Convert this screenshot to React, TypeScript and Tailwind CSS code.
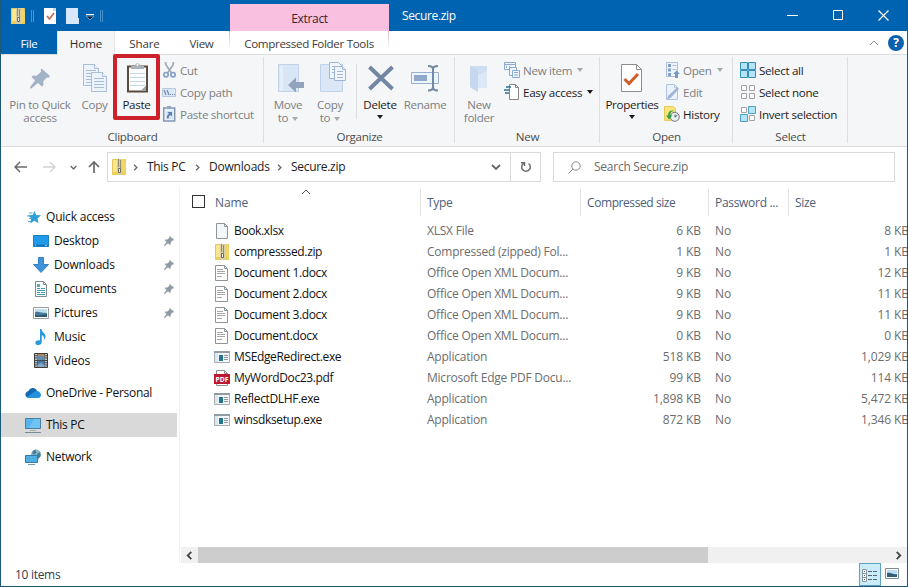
import type { ReactNode } from 'react'
import clsx from 'clsx'

type IconProps = { className?: string }

/* ---------- icons ---------- */

function ZipIcon({ className = 'w-4 h-4' }: IconProps) {
  return (
    <svg viewBox="0 0 16 16" className={className} fill="none">
      <path d="M1.500.5h13v15h-13z" fill="#fae68d" stroke="#e3c65c" />
      <path d="M11 0h3v3h1v13h-4z" fill="#f3d565" />
      <path d="M1 13h14v3H1z" fill="#efcf5b" />
      <path d="M6 0h5v16H6z" fill="#d9cfa6" />
      <path d="M7 1h1M9 2h1M7 3h1M9 4h1M7 5h1M9 6h1M7 7h1M9 8h1" stroke="#4f4a45" strokeWidth="1" />
      <path d="M7.500 9.500h2v4h-2z" fill="#f6f2e2" stroke="#6f6a5f" />
    </svg>
  )
}

function PushpinIcon({ className = 'w-3 h-3', fill = '#8c9aa8' }: IconProps & { fill?: string }) {
  return (
    <svg viewBox="0 0 20 20" className={className}>
      <path d="M11.500 0 20 7.500l-1.500 1.700-1.800-.3-3.500 4 .3 3.600-1.500 1.700-4-3.600L1.300 20 0 19.800.1 18.500l5-6.600L1.500 8.400 3 6.900l3.700.3 4.500-4.300-.6-1.800z" fill={fill} />
    </svg>
  )
}

function CopyIcon() {
  return (
    <svg viewBox="0 0 32 32" className="w-8 h-8" fill="#edf3fb" stroke="#a9bdd9">
      <path d="M4.500 2.500h11l4 4v17h-15z" />
      <path d="M15.500 2.500v4h4M7 8.500h10M7 11.500h10M7 14.500h6M7 17.500h5M7 20.500h5" />
      <path d="M12.500 10.500h11l4 4v15h-15z" />
      <path d="M23.500 10.500v4h4M15 16.500h10M15 19.500h10M15 22.500h10M15 25.500h10" />
    </svg>
  )
}

function PasteIcon() {
  return (
    <svg viewBox="0 0 32 32" className="w-8 h-8" fill="none">
      <path d="M7 4.500h19v25H7z" fill="#fbfdff" stroke="#5b4a3f" strokeWidth="2" />
      <path d="M9 11.500h15M9 15.500h15M9 19.500h15M9 23.500h15" stroke="#c3d9e6" />
      <path d="M20 28.500l5-5v5z" fill="#9da5aa" />
      <path d="M10 7V4h4c0-2 1-2.500 2.500-2.500S19 2 19 4h4v3z" fill="#a9b2bb" />
      <circle cx="16.500" cy="3" r="1" fill="#fff" />
    </svg>
  )
}

function ScissorsIcon() {
  return (
    <svg viewBox="0 0 16 16" className="w-4 h-4" fill="none">
      <path d="M3.500 0 4 3l5.500 8M11.500 0 11 3l-5.500 8" stroke="#a2abb6" strokeWidth="1.800" />
      <circle cx="4" cy="12.700" r="2.200" stroke="#819fc8" strokeWidth="1.600" />
      <circle cx="11" cy="12.700" r="2.200" stroke="#819fc8" strokeWidth="1.600" />
    </svg>
  )
}

function CopyPathIcon() {
  return (
    <svg viewBox="0 0 16 16" className="w-4 h-4" fill="none">
      <path d="M.5 4.500h13v8H.5z" fill="#dbe8f7" stroke="#b9c9dd" />
      <path d="M2 6l2 5M5 6l2 5" stroke="#7189ac" strokeWidth="1.200" />
      <path d="M8 10.500h1M10 10.500h1M12 10.500h1" stroke="#7189ac" />
    </svg>
  )
}

function PasteShortcutIcon() {
  return (
    <svg viewBox="0 0 16 16" className="w-4 h-4" fill="none">
      <path d="M1.700 2h11v13h-11z" fill="#e9f1fb" stroke="#8397b3" strokeWidth="1.500" />
      <path d="M5 0h4v3H5z" fill="#96a9c1" />
      <path d="M4 5h7v8H4z" fill="#d6e4f5" />
      <path d="M5 12.500c-.5-2.500.5-4 2-4.800L5.500 6H10v4.500L8.600 9C7 9.700 6.500 11 6.800 12.500z" fill="#5c7fae" />
    </svg>
  )
}

function MoveToIcon() {
  return (
    <svg viewBox="0 0 32 32" className="w-8 h-8">
      <path d="M6.500 2.500h20v27h-20z" fill="#d9e6f5" stroke="#c1d3ea" />
      <path d="M8 4h3v24H8z" fill="#e5eef9" />
      <path d="M16 23l8-7.500V20h8v6h-8v4.500z" fill="#91a3bd" />
    </svg>
  )
}

function CopyToIcon() {
  return (
    <svg viewBox="0 0 32 32" className="w-8 h-8" fill="#f1f6fc" stroke="#9fb6d5">
      <path d="M6.500 2.500h22v27h-22z" fill="#dbe7f6" stroke="#c1d3ea" />
      <path d="M15.500.5h9l3 3v13h-12z" />
      <path d="M18 4.500h6M18 7.500h3M18 10.500h2" />
      <path d="M20.500 4.500h8l3 3v11h-11z" />
      <path d="M28.500 4.500v3h3M23 9.500h6M23 12.500h6M23 15.500h6" />
    </svg>
  )
}

function DeleteIcon() {
  return (
    <svg viewBox="0 0 32 32" className="w-8 h-8" fill="none">
      <path d="M5.500 5 28.500 27M28.500 5 5.500 27" stroke="#7387a2" strokeWidth="4" />
    </svg>
  )
}

function RenameIcon() {
  return (
    <svg viewBox="0 0 32 32" className="w-8 h-8" fill="none">
      <path d="M2.500 10.500h27v11h-27z" fill="#edf4fc" stroke="#98b0d0" />
      <path d="M5 13h13v6H5z" fill="#91a8ca" />
      <path d="M19 4c3 0 5 .3 5 3v18c0 2.700-2 3.500-5 3.500M29 4c-3 0-5 .3-5 3v18c0 2.700 2 3.500 5 3.500" stroke="#7489a6" strokeWidth="2" />
    </svg>
  )
}

function NewFolderIcon() {
  return (
    <svg viewBox="0 0 32 32" className="w-8 h-8">
      <path d="M7 4h17v21h-9v5l-8-5z" fill="#cfdef1" />
      <path d="M7 4l8 4v22l-8-5z" fill="#c6d8ee" />
      <path d="M15 12h3l6-4v18h-9z" fill="#dce8f6" />
    </svg>
  )
}

function NewItemIcon() {
  return (
    <svg viewBox="0 0 16 16" className="w-4 h-4" fill="#eff5fc" stroke="#8caad0">
      <path d="M.5.5h11v7H.5zM.5 2.500h11M2.500 4v2M5.500 4v2" />
      <path d="M5.500 5.500h7v8h-7z" />
      <path d="M8.500 8.500h7v7h-7zM10 10.500h4M10 13h4" />
    </svg>
  )
}

function EasyAccessIcon() {
  return (
    <svg viewBox="0 0 16 16" className="w-4 h-4" fill="none">
      <path d="M5.500.5h6l3 3v12h-9z" fill="#fff" stroke="#888" />
      <path d="M11.500.5v3h3" stroke="#888" />
      <path d="M2 3h5M0 6h6M1 9h4" stroke="#2f7196" strokeWidth="1.400" />
    </svg>
  )
}

function PropertiesIcon({ className = 'w-8 h-8' }: IconProps) {
  return (
    <svg viewBox="0 0 32 32" className={className} fill="none">
      <path d="M5.500 2.500h15l5 5v22h-20z" fill="#fff" stroke="#8d8d8d" />
      <path d="M20.500 2.500v5h5" stroke="#8d8d8d" />
      <path d="M8.500 17l4.500 4.500L22 12" stroke="#cf5d2c" strokeWidth="3" />
    </svg>
  )
}

function OpenIcon() {
  return (
    <svg viewBox="0 0 16 16" className="w-4 h-4" fill="none">
      <path d="M2.500.5h11v14h-11z" fill="#eef4fc" stroke="#a9bfdd" />
      <path d="M4 2h3v3H4zM4 6.500h3v3H4zM4 11h3v3H4z" fill="#839fc8" />
      <path d="M8.500 3.500h4M8.500 7.500h4" stroke="#abc0db" />
      <path d="M11 16v-4H9l3.500-3.500L16 12h-2v4z" fill="#7897c5" />
    </svg>
  )
}

function EditIcon() {
  return (
    <svg viewBox="0 0 16 16" className="w-4 h-4" fill="none">
      <path d="M2.500.5h8l3 3v12h-11z" fill="#eaf2fb" stroke="#afc4df" />
      <path d="M3 15.500l1-3.500L13.500 3l1.500 1.800L6.500 14z" fill="#9fb6d6" />
      <path d="M10.500.5v3h3" stroke="#afc4df" />
    </svg>
  )
}

function HistoryIcon() {
  return (
    <svg viewBox="0 0 16 16" className="w-4 h-4" fill="none">
      <path d="M.5.5h9l2 2v12H.5z" fill="#fbe379" stroke="#e5cb59" />
      <circle cx="10.800" cy="10.800" r="4.500" fill="#e7eeee" stroke="#71777a" />
      <path d="M11 8.500v2.700l2.500-2.200" stroke="#57636a" />
      <path d="M2 9.500h2c0-4 3-6 6-4.500-3 .2-3.700 2-3.700 4.500h2L5 13.500z" fill="#32a34b" />
    </svg>
  )
}

function SelectIcon({ kind }: { kind: 'all' | 'none' | 'invert' }) {
  if (kind === 'all') {
    return (
      <svg viewBox="0 0 16 16" className="w-4 h-4" fill="#b4e4f6" stroke="#368eb5">
        <path d="M.5.5h7v7h-7zM8.500.5h7v7h-7zM.5 8.500h7v7h-7zM8.500 8.500h7v7h-7z" />
      </svg>
    )
  }
  if (kind === 'none') {
    return (
      <svg viewBox="0 0 16 16" className="w-4 h-4" fill="#fff" stroke="#a2a2a2">
        <path d="M1.500 1.500h5v5h-5zM9.500 1.500h5v5h-5zM1.500 9.500h5v5h-5zM9.500 9.500h5v5h-5z" />
      </svg>
    )
  }
  return (
    <svg viewBox="0 0 16 16" className="w-4 h-4" stroke="#4c9fc3">
      <path d="M8.500.5h7v7h-7zM.5 8.500h7v7h-7z" fill="#b4e4f6" />
      <path d="M1.500 1.500h5v5h-5zM9.500 9.500h5v5h-5z" fill="#fff" stroke="#a2a2a2" />
    </svg>
  )
}

function FileIcon({ kind }: { kind: string }) {
  if (kind === 'zip') return <ZipIcon />
  if (kind === 'exe') {
    return (
      <svg viewBox="0 0 16 16" className="w-4 h-4" fill="none">
        <path d="M.5 2.500h15v11H.5z" fill="#f4f8fa" stroke="#a7adb2" />
        <path d="M0 2h16v2H0z" fill="#929ca3" />
        <path d="M1 4h3v9H1z" fill="#d7eaf4" />
        <path d="M5 6h4v6H5z" fill="#24768e" />
        <path d="M10 6.500h4M10 8.500h4M10 10.500h4" stroke="#8f979c" />
      </svg>
    )
  }
  if (kind === 'pdf') {
    return (
      <svg viewBox="0 0 16 16" className="w-4 h-4" fill="none">
        <path d="M2.500.5h8l3 3v12h-11z" fill="#fff" stroke="#8f8f8f" />
        <path d="M10.500.5v3h3" stroke="#8f8f8f" />
        <path d="M0 4h16v10H0z" fill="#bd1831" />
        <text x="8" y="11.500" textAnchor="middle" fontSize="6.700" fontWeight="700" fill="#fff" letterSpacing="0" fontFamily="Open Sans, sans-serif">PDF</text>
      </svg>
    )
  }
  return (
    <svg viewBox="0 0 16 16" className="w-4 h-4" fill="none" stroke="#8e959a">
      <path d={kind === 'doc' ? 'M1.500.5h9l3 3v12h-12z' : 'M2.500.5h8l3 3v12h-11z'} fill={kind === 'doc' ? '#fff' : '#f2f7fa'} />
      <path d="M10.500.5v3h3" />
      {kind === 'doc' && <path d="M3 4.500h6M3 6.500h8M3 8.500h8M3 11.500h5" stroke="#a7a7a7" />}
    </svg>
  )
}

function NavIcon({ kind }: { kind: string }) {
  const cls = 'w-4 h-4 shrink-0'
  switch (kind) {
    case 'star':
      return (
        <svg viewBox="0 0 16 16" className={cls}>
          <path d="M8.500 2l1.600 4 4.900.2-3.500 3.200 1 4.900-4.200-2.500L4.200 14.500l1-5L2 6.300 6.700 6z" fill="#2f9fdc" />
          <path d="M3 4h3.500M1 7h3M3 9.500h3M2 12.500h3" stroke="#57aede" />
        </svg>
      )
    case 'desktop':
      return (
        <svg viewBox="0 0 16 16" className={cls}>
          <path d="M.5 2.500h15v11H.5z" fill="#209bec" stroke="#1c80bd" />
          <path d="M1 11.500h14V13H1z" fill="#1276ba" />
          <path d="M2 12.300h1M12 12.300h2" stroke="#9fdafa" />
        </svg>
      )
    case 'download':
      return (
        <svg viewBox="0 0 16 16" className={cls}>
          <path d="M5.500.5h5v7h5L8 15.500.5 7.500h5z" fill="#3d94db" stroke="#3680be" />
        </svg>
      )
    case 'document':
      return (
        <svg viewBox="0 0 16 16" className={cls} fill="none">
          <path d="M2.500.5h8l3 3v12h-11z" fill="#fff" stroke="#7e8b93" />
          <path d="M10.500.5v3h3" stroke="#7e8b93" />
          <path d="M4 5.500h3M4 7.500h3M8 7.500h4M4 9.500h8M4 11.500h3M8 11.500h4M4 13.500h8" stroke="#409aa9" />
          <path d="M4 3h3v3H4z" fill="#58abb8" />
        </svg>
      )
    case 'picture':
      return (
        <svg viewBox="0 0 16 16" className={cls}>
          <path d="M.5 2.500h15v11H.5z" fill="#fff" stroke="#9b9b9b" />
          <path d="M2 4h12v8H2z" fill="#bfdfed" />
          <path d="M2 7c4-1 6 1 12 1v4H2z" fill="#477c9c" />
          <path d="M2 10c5 1 8-1 12-.5V12H2z" fill="#2f596f" />
        </svg>
      )
    case 'music':
      return (
        <svg viewBox="0 0 16 16" className={cls}>
          <path d="M7 0h1.500c.4 3.500 4 4 4 7.300 0 1.700-.8 3-1.500 3.700.5-3-.7-4.300-2.200-5V13c0 2-1.600 3-3.500 3-1.800 0-3-.8-3-2.300C2.300 12 4.500 11 7 11.500z" fill="#289adb" />
        </svg>
      )
    case 'video':
      return (
        <svg viewBox="0 0 16 16" className={cls}>
          <path d="M1.500.5h13v14h-13z" fill="#45484a" stroke="#3b3b3b" />
          <path d="M4.500 1h7v6h-7z" fill="#b9874d" />
          <path d="M4.500 3l4-1 3 3v2h-7z" fill="#628db2" />
          <path d="M4.500 8h7v6h-7z" fill="#447eac" />
          <path d="M4.500 12l3-2 4 2v2h-7z" fill="#8aaac3" />
          <path d="M3 1v13M13 1v13" stroke="#efefef" strokeWidth="1.500" strokeDasharray="1.300 1" />
        </svg>
      )
    case 'onedrive':
      return (
        <svg viewBox="0 0 16 16" className={cls}>
          <path d="M3.500 6C5 2 10.500 1.800 12.200 6L10 13H4C-.5 13-1 7 3.500 6z" fill="#1269b6" />
          <path d="M2 12l7-5c3-2.500 7-.2 7 2.900C16 12 14.500 13 12.800 13H4c-.8 0-1.500-.4-2-1z" fill="#2491dc" />
        </svg>
      )
    case 'pc':
      return (
        <svg viewBox="0 0 16 16" className={cls}>
          <path d="M.5 1.500h15v10H.5z" fill="#56b5ed" stroke="#477f9f" />
          <path d="M9 2h6v9H4z" fill="#8bd1f7" opacity=".5" />
          <path d="M5 13.500h6" stroke="#a2adb4" />
          <path d="M0 15.500h16" stroke="#778b96" />
        </svg>
      )
    default:
      return (
        <svg viewBox="0 0 16 16" className={cls}>
          <circle cx="11" cy="5.500" r="5" fill="#85b6ce" />
          <path d="M7.500 2.500l3-2 1 3-2 2-2-.5zM12 5l3-2 .6 4-2.600 3z" fill="#467f93" />
          <path d="M.5 6.500h12v7H.5z" fill="#50afe2" stroke="#317aa6" />
          <path d="M3 15.500h7" stroke="#7698aa" />
        </svg>
      )
  }
}

function Chevron({ dir, className }: { dir: 'left' | 'right' | 'down' | 'up'; className?: string }) {
  const d = {
    left: 'M7 1 3 5l4 4',
    right: 'M3 1l4 4-4 4',
    down: 'M1 3l4 4 4-4',
    up: 'M1 7l4-4 4 4',
  }[dir]
  return (
    <svg viewBox="0 0 10 10" className={className} fill="none" stroke="currentColor">
      <path d={d} />
    </svg>
  )
}

function Caret({ className }: IconProps) {
  return (
    <svg viewBox="0 0 6 4" className={clsx('w-[6px] h-1 inline-block', className)}>
      <path d="M0 0h6L3 4z" fill="currentColor" />
    </svg>
  )
}

/* ---------- ribbon ---------- */

function BigButton({ icon, lines, width, enabled, caret }: { icon: ReactNode; lines: string[]; width: string; enabled?: boolean; caret?: boolean }) {
  return (
    <button className={clsx('flex flex-col items-center shrink-0 pt-[7px]', width, enabled ? 'text-[#1c1c1c]' : 'text-[#7c7f83]')}>
      <span className="flex items-center justify-center h-8">{icon}</span>
      <span className="mt-1 flex flex-col items-center leading-[13px] whitespace-nowrap">
        {lines.map((line, i) => (
          <span key={line} className="flex items-center gap-1">
            {line}
            {caret && i > 0 && <Caret className="mt-[2px] text-[#a7aaad]" />}
          </span>
        ))}
        {caret && lines.length === 1 && <Caret className="mt-1" />}
      </span>
    </button>
  )
}

function SmallButton({ icon, label, gap = 'gap-[2px]', enabled, caret }: { icon: ReactNode; label: string; gap?: string; enabled?: boolean; caret?: boolean }) {
  return (
    <button className={clsx('flex items-center h-[22px] whitespace-nowrap', gap, enabled ? 'text-[#1c1c1c]' : 'text-[#7c7f83]')}>
      {icon}
      <span className="pt-px">{label}</span>
      {caret && <Caret className={clsx('ml-[2px]', !enabled && 'text-[#a7aaad]')} />}
    </button>
  )
}

function Group({ title, width, children }: { title: string; width: string; children: ReactNode }) {
  return (
    <section className={clsx('flex flex-col shrink-0 relative', width)}>
      <div className="flex h-[73px]">{children}</div>
      <div className="text-center text-[#4c4c4c] leading-[19px]">{title}</div>
      <span className="absolute right-0 top-[2px] w-px h-[86px] bg-[#dedfe1]" />
    </section>
  )
}

function Ribbon() {
  return (
    <div className="flex h-[93px] bg-[#f5f6f8] border-y border-[#dadbdc] text-[11.6px] tracking-[-0.29px]">
      <Group title="Clipboard" width="w-[263px]">
        <BigButton width="w-[78px]" lines={['Pin to Quick', 'access']} icon={<PushpinIcon className="w-[20px] h-[21px]" fill="#a3b3c7" />} />
        <BigButton width="w-[31px]" lines={['Copy']} icon={<CopyIcon />} />
        <div className="relative flex justify-center w-[47px] ml-[3px]">
          <BigButton width="w-[47px]" enabled lines={['Paste']} icon={<PasteIcon />} />
          <span className="absolute left-0 -top-px w-[47px] h-[66px] rounded-[2px] border-4 border-[#cd222b]" />
        </div>
        <div className="flex flex-col pt-1 ml-[2px]">
          <SmallButton icon={<ScissorsIcon />} label="Cut" />
          <SmallButton icon={<CopyPathIcon />} label="Copy path" />
          <SmallButton icon={<PasteShortcutIcon />} label="Paste shortcut" />
        </div>
      </Group>

      <Group title="Organize" width="w-[191px]">
        <BigButton width="w-12" lines={['Move', 'to']} caret icon={<MoveToIcon />} />
        <BigButton width="w-9" lines={['Copy', 'to']} caret icon={<CopyToIcon />} />
        <span className="w-px h-[55px] mt-[9px] ml-2 bg-[#dedfe1]" />
        <BigButton width="w-[46px]" enabled caret lines={['Delete']} icon={<DeleteIcon />} />
        <BigButton width="w-11" lines={['Rename']} icon={<RenameIcon />} />
      </Group>

      <Group title="New" width="w-[145px]">
        <BigButton width="w-12" lines={['New', 'folder']} icon={<NewFolderIcon />} />
        <div className="flex flex-col pt-1 ml-[1px]">
          <SmallButton gap="gap-[3px]" icon={<NewItemIcon />} label="New item" caret />
          <SmallButton gap="gap-[3px]" icon={<EasyAccessIcon />} label="Easy access" enabled caret />
        </div>
      </Group>

      <Group title="Open" width="w-[133px]">
        <BigButton width="w-16" enabled caret lines={['Properties']} icon={<PropertiesIcon />} />
        <div className="flex flex-col pt-1">
          <SmallButton gap="gap-[3px]" icon={<OpenIcon />} label="Open" caret />
          <SmallButton gap="gap-[3px]" icon={<EditIcon />} label="Edit" />
          <SmallButton gap="gap-[3px]" icon={<HistoryIcon />} label="History" enabled />
        </div>
      </Group>

      <Group title="Select" width="w-[115px]">
        <div className="flex flex-col pt-1 ml-[7px]">
          <SmallButton gap="gap-[3px]" icon={<SelectIcon kind="all" />} label="Select all" enabled />
          <SmallButton gap="gap-[3px]" icon={<SelectIcon kind="none" />} label="Select none" enabled />
          <SmallButton gap="gap-[3px]" icon={<SelectIcon kind="invert" />} label="Invert selection" enabled />
        </div>
      </Group>
    </div>
  )
}

/* ---------- title bar and tabs ---------- */

function TitleBar() {
  return (
    <div className="flex h-[31px] bg-[#0063b1] text-white tracking-[-0.3px]">
      <div className="flex items-center w-[229px] pl-[9px]">
        <ZipIcon />
        <span className="w-[3px] h-3 ml-[5px] border-x border-[#4c93cc]" />
        <span className="flex justify-center w-[12px] h-4 ml-[10px] bg-white">
          <svg viewBox="0 0 12 16" className="w-3 h-4" fill="none">
            <path d="M3 8l2.500 3L10 5" stroke="#c36a53" strokeWidth="1.700" />
            <path d="M9 0h3v3H9z" fill="#c4d7e9" />
          </svg>
        </span>
        <svg viewBox="0 0 14 16" className="w-[14px] h-4 ml-[9px]">
          <path d="M1 0h12v10h1v6H1z" fill="#d8e8fa" />
        </svg>
        <svg viewBox="0 0 8 7" className="w-2 h-[7px] ml-[7px] mt-[3px]">
          <path d="M0 .5h8" stroke="#fff" />
          <path d="M0 2h8L4 6z" fill="#08284e" stroke="#c8def3" strokeWidth=".5" />
        </svg>
        <span className="w-[3px] h-3 ml-[6px] border-x border-[#4c93cc]" />
      </div>
      <div className="w-[159px] mt-1 bg-[#f9c1df] text-[#3a2430] text-center leading-[29px]">Extract</div>
      <div className="pl-[13px] leading-[32px] flex-1 tracking-[-0.35px]">Secure.zip</div>
      <div className="flex w-[137px] items-center justify-between pl-[17px] pr-[18px]">
        <svg viewBox="0 0 11 11" className="w-[11px] h-[11px]" stroke="#fff"><path d="M0 5.500h11" /></svg>
        <svg viewBox="0 0 11 11" className="w-[11px] h-[11px]" stroke="#fff" fill="none"><path d="M.5.5h9v9h-9z" /></svg>
        <svg viewBox="0 0 11 11" className="w-[11px] h-[11px]" stroke="#fff" strokeWidth="1.200"><path d="M.5.5l10 10M10.500.5l-10 10" /></svg>
      </div>
    </div>
  )
}

function Tabs() {
  return (
    <div className="flex h-[23px] leading-[25px] text-[#3b3b3b] text-center text-[11.6px] tracking-[-0.32px]">
      <div className="w-14 bg-[#0063b1] text-white">File</div>
      <div className="w-[58px] h-6 relative bg-[#f5f6f8] border-x border-[#e3e4e6] text-[#2b2b2b] tracking-[-0.1px]">Home</div>
      <div className="w-[59px] tracking-[-0.15px]">Share</div>
      <div className="w-[55px]">View</div>
      <div className="flex w-[160px]">
        <span className="w-px h-[18px] bg-linear-to-b from-[#d5b4c6] to-white" />
        <span className="flex-1">Compressed Folder Tools</span>
        <span className="w-px h-[18px] bg-linear-to-b from-[#d5b4c6] to-white" />
      </div>
      <div className="flex flex-1 justify-end items-center gap-[9px] pr-[3px]">
        <Chevron dir="up" className="w-[10px] h-[10px] text-[#939393]" />
        <span className="flex items-center justify-center w-4 h-4 rounded-full bg-[#0b61ad] text-white text-[12px] font-bold leading-none">?</span>
      </div>
    </div>
  )
}

/* ---------- address bar ---------- */

function AddressBar() {
  return (
    <div className="flex h-10 pt-[5px] text-[#1c1c1c] tracking-[-0.3px]">
      <div className="flex items-center w-[106px] h-[30px] pl-[13px] text-[#6a6a6a]">
        <svg viewBox="0 0 13 12" className="w-[13px] h-3" fill="none" stroke="currentColor" strokeWidth="1.500"><path d="M13 6H1M6 1 1 6l5 5" /></svg>
        <svg viewBox="0 0 13 12" className="w-[13px] h-3 ml-[16px] text-[#d2d2d2]" fill="none" stroke="currentColor" strokeWidth="1.300"><path d="M0 6h12M7 1l5 5-5 5" /></svg>
        <Chevron dir="down" className="w-[7px] h-[7px] ml-[14px] stroke-2" />
        <svg viewBox="0 0 12 14" className="w-3 h-[14px] ml-[11px]" fill="none" stroke="currentColor" strokeWidth="1.700"><path d="M6 13V2M1 7l5-5 5 5" /></svg>
      </div>
      <div className="flex items-center w-[434px] h-[30px] border border-[#d9d9d9] pl-[3px]">
        <ZipIcon />
        <Chevron dir="right" className="w-[7px] h-[7px] ml-[5px] stroke-2 text-[#6e6e6e]" />
        <span className="w-[43px] ml-2">This PC</span>
        <Chevron dir="right" className="w-[7px] h-[7px] ml-1 stroke-2 text-[#6e6e6e]" />
        <span className="w-[62px] ml-2 tracking-[-0.2px]">Downloads</span>
        <Chevron dir="right" className="w-[7px] h-[7px] ml-[5px] stroke-2 text-[#6e6e6e]" />
        <span className="ml-2 flex-1">Secure.zip</span>
        <Chevron dir="down" className="w-[10px] h-[10px] mr-[9px] stroke-[1.800] text-[#666]" />
        <span className="flex items-center justify-center w-[30px] h-full border-l border-[#d9d9d9]">
          <svg viewBox="0 0 12 12" className="w-3 h-3" fill="none" stroke="#6c6c6c" strokeWidth="1.500">
            <path d="M8.500 2.500a4.300 4.300 0 1 1-5 0M4.500 5V1.700H1" />
          </svg>
        </span>
      </div>
      <div className="flex items-center w-[342px] h-[30px] ml-3 border border-[#d9d9d9] pl-[14px] text-[#6b6b6b]">
        <svg viewBox="0 0 13 13" className="w-[13px] h-[13px] mr-[13px]" fill="none" stroke="#8c8c8c"><circle cx="8" cy="5" r="4.200" /><path d="M5 8 .5 12.500" /></svg>
        <span className="tracking-[-0.25px]">Search Secure.zip</span>
      </div>
    </div>
  )
}

/* ---------- navigation pane ---------- */

const quickAccess = [
  { icon: 'desktop', label: 'Desktop', pinned: true },
  { icon: 'download', label: 'Downloads', pinned: true },
  { icon: 'document', label: 'Documents', pinned: true },
  { icon: 'picture', label: 'Pictures', pinned: true },
  { icon: 'music', label: 'Music' },
  { icon: 'video', label: 'Videos' },
]

const places = [
  { icon: 'onedrive', label: 'OneDrive - Personal' },
  { icon: 'pc', label: 'This PC', active: true },
  { icon: 'network', label: 'Network' },
]

function Sidebar() {
  return (
    <nav className="w-[179px] pt-[18px] border-r border-[#f0f0f0] text-[#111] tracking-[-0.3px]">
      <div className="flex items-center h-6 pl-[25px] gap-1 tracking-[-0.2px]">
        <NavIcon kind="star" />
        Quick access
      </div>
      {quickAccess.map((item) => (
        <div key={item.label} className="flex items-center h-6 pl-8 pr-[5px] gap-[5px]">
          <NavIcon kind={item.icon} />
          <span className="flex-1 tracking-[-0.2px]">{item.label}</span>
          {item.pinned && <PushpinIcon className="w-[10px] h-[10px]" />}
        </div>
      ))}
      <div className="flex flex-col gap-2 pt-2">
        {places.map((item) => (
          <div key={item.label} className={clsx('flex items-center h-6 w-[176px] pl-6 gap-[5px] whitespace-nowrap', item.active && 'bg-[#d9d9d9]')}>
            <NavIcon kind={item.icon} />
            {item.label}
          </div>
        ))}
      </div>
    </nav>
  )
}

/* ---------- file list ---------- */

const files = [
  { icon: 'blank', name: 'Book.xlsx', type: 'XLSX File', packed: '6 KB', size: '8 KB' },
  { icon: 'zip', name: 'compresssed.zip', type: 'Compressed (zipped) Fol...', packed: '1 KB', size: '1 KB' },
  { icon: 'doc', name: 'Document 1.docx', type: 'Office Open XML Docum...', packed: '9 KB', size: '12 KB' },
  { icon: 'doc', name: 'Document 2.docx', type: 'Office Open XML Docum...', packed: '9 KB', size: '11 KB' },
  { icon: 'doc', name: 'Document 3.docx', type: 'Office Open XML Docum...', packed: '9 KB', size: '11 KB' },
  { icon: 'doc', name: 'Document.docx', type: 'Office Open XML Docum...', packed: '0 KB', size: '0 KB' },
  { icon: 'exe', name: 'MSEdgeRedirect.exe', type: 'Application', packed: '518 KB', size: '1,029 KB' },
  { icon: 'pdf', name: 'MyWordDoc23.pdf', type: 'Microsoft Edge PDF Docu...', packed: '99 KB', size: '114 KB' },
  { icon: 'exe', name: 'ReflectDLHF.exe', type: 'Application', packed: '1,898 KB', size: '5,472 KB' },
  { icon: 'exe', name: 'winsdksetup.exe', type: 'Application', packed: '872 KB', size: '1,346 KB' },
]

function FileList() {
  return (
    <main className="flex flex-col flex-1 min-w-0 overflow-hidden">
      <div className="flex h-[33px] pt-[2px] leading-[27px] text-[#4c607a] whitespace-nowrap tracking-[-0.3px]">
        <div className="relative flex w-[241px] pl-3 border-r border-[#e2e2e2] h-[27px]">
          <span className="w-[13px] h-[13px] mt-[6px] mr-[10px] border border-[#333]" />
          <span className="tracking-[-0.1px]">Name</span>
          <Chevron dir="up" className="absolute left-[121px] -top-[2px] w-[10px] h-[10px] text-[#555]" />
        </div>
        <div className="w-[160px] pl-[6px] border-r border-[#e2e2e2] h-[27px]">Type</div>
        <div className="w-[128px] pl-[6px] border-r border-[#e2e2e2] h-[27px] tracking-[-0.42px]">Compressed size</div>
        <div className="w-[80px] pl-[6px] border-r border-[#e2e2e2] h-[27px]">Password ...</div>
        <div className="pl-[6px]">Size</div>
      </div>
      <div className="flex-1">
        {files.map((file) => (
          <div key={file.name} className="flex items-center h-[21px] text-[#6d6d6d] whitespace-nowrap">
            <div className="flex items-center shrink-0 w-[247px] pl-[34px] gap-1 text-[#111] tracking-[-0.36px]">
              <FileIcon kind={file.icon} />
              {file.name}
            </div>
            <div className="shrink-0 w-[153px] tracking-[-0.23px]">{file.type}</div>
            <div className="shrink-0 w-[121px] text-right">{file.packed}</div>
            <div className="shrink-0 w-[73px] pl-[14px]">No</div>
            <div className="shrink-0 w-[135px] text-right">{file.size}</div>
          </div>
        ))}
      </div>
      <div className="flex items-center h-4 ml-[1px] bg-[#f0f0f0] text-[#444]">
        <span className="w-[17px] flex justify-center"><Chevron dir="left" className="w-[9px] h-[9px] stroke-2" /></span>
        <span className="w-[510px] h-4 bg-[#cdcdcd]" />
        <Chevron dir="right" className="w-[9px] h-[9px] ml-auto mr-1 stroke-2" />
      </div>
    </main>
  )
}

function StatusBar() {
  return (
    <footer className="flex h-[23px] pl-[14px] text-[#2d3e50]">
      <span className="leading-[24px] tracking-[-0.3px]">10 items</span>
      <span className="flex items-center justify-center w-[22px] h-[23px] ml-auto bg-[#c9ebfa] border border-[#5da4bf]">
        <svg viewBox="0 0 16 14" className="w-4 h-[14px]" fill="none" stroke="#58686f">
          <path d="M.5 1.500h4v4h-4zM.5 5.500h4v4h-4zM.5 9.500h4v4h-4z" fill="#fff" stroke="#8b979d" />
          <path d="M2 3.500h1M2 7.500h1M2 11.500h1M6 3.500h4M11 3.500h4M6 7.500h4M11 7.500h4M6 11.500h4M11 11.500h4" />
        </svg>
      </span>
      <svg viewBox="0 0 14 11" className="w-[14px] h-[11px] mt-[5px] ml-1 mr-2">
        <path d="M.5.5h13v10H.5z" fill="#fff" stroke="#808c92" />
        <path d="M2 2h10v7H2z" fill="#b9deef" />
        <path d="M2 5c4-1 6 2 10 1v3H2z" fill="#315f7a" />
      </svg>
    </footer>
  )
}

export default function App() {
  return (
    <div className="w-[908px] h-[587px] flex flex-col overflow-hidden bg-white border-x border-b border-[#1d5878] text-[12px] tracking-[-0.1px] [font-family:'Open_Sans','Noto_Sans',sans-serif] select-none">
      <TitleBar />
      <Tabs />
      <Ribbon />
      <AddressBar />
      <div className="flex flex-1 min-h-0">
        <Sidebar />
        <FileList />
      </div>
      <StatusBar />
    </div>
  )
}
